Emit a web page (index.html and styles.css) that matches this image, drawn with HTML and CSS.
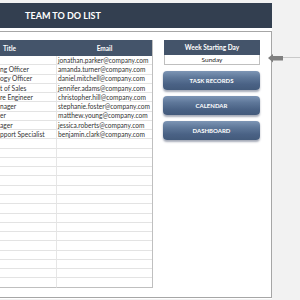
FILE: index.html
```html
<!DOCTYPE html>
<html>
<head>
<meta charset="utf-8">
<link rel="stylesheet" href="styles.css">
</head>
<body>
<div class="page">
  <div class="banner"><span class="banner-title">TEAM TO DO LIST</span></div>
  <div class="panel">
    <div class="frame">
      <div class="todo-table">
        <div class="th th-title">Title</div>
        <div class="th th-email">Email</div>
        <div class="td td-title"></div><div class="td td-email">jonathan.parker@company.com</div>
        <div class="td td-title">ng Officer</div><div class="td td-email">amanda.turner@company.com</div>
        <div class="td td-title">ogy Officer</div><div class="td td-email">daniel.mitchell@company.com</div>
        <div class="td td-title">t of Sales</div><div class="td td-email">jennifer.adams@company.com</div>
        <div class="td td-title">re Engineer</div><div class="td td-email">christopher.hill@company.com</div>
        <div class="td td-title">nager</div><div class="td td-email">stephanie.foster@company.com</div>
        <div class="td td-title">er</div><div class="td td-email">matthew.young@company.com</div>
        <div class="td td-title">ager</div><div class="td td-email">jessica.roberts@company.com</div>
        <div class="td td-title">pport Specialist</div><div class="td td-email">benjamin.clark@company.com</div>
        <div class="td td-title"></div><div class="td td-email"></div>
        <div class="td td-title"></div><div class="td td-email"></div>
        <div class="td td-title"></div><div class="td td-email"></div>
        <div class="td td-title"></div><div class="td td-email"></div>
        <div class="td td-title"></div><div class="td td-email"></div>
        <div class="td td-title"></div><div class="td td-email"></div>
        <div class="td td-title"></div><div class="td td-email"></div>
        <div class="td td-title"></div><div class="td td-email"></div>
        <div class="td td-title"></div><div class="td td-email"></div>
        <div class="td td-title"></div><div class="td td-email"></div>
        <div class="td td-title"></div><div class="td td-email"></div>
        <div class="td td-title"></div><div class="td td-email"></div>
        <div class="td td-title"></div><div class="td td-email"></div>
        <div class="td td-title"></div><div class="td td-email"></div>
        <div class="td td-title"></div><div class="td td-email"></div>
        <div class="td td-title last"></div><div class="td td-email last"></div>
      </div>
      <div class="side">
        <div class="week-head">Week Starting Day</div>
        <div class="week-value">Sunday</div>
        <div class="btn">TASK RECORDS</div>
        <div class="btn">CALENDAR</div>
        <div class="btn">DASHBOARD</div>
      </div>
    </div>
  </div>
  <svg class="pointer" width="32" height="10" viewBox="0 0 32 10">
    <line x1="4" y1="3.5" x2="32" y2="3.5" stroke="#c9c9c9" stroke-width="1"/>
    <polygon points="0,4 5,0 5,2 15,2 15,6.5 5,6.5 5,8.5" fill="#7f7f7f"/>
  </svg>
</div>
</body>
</html>
```

FILE: styles.css
```css
html, body {
  margin: 0;
  padding: 0;
}
body {
  background: #f2f2f2;
  font-family: Lato, "Open Sans", sans-serif;
  width: 300px;
  height: 300px;
  overflow: hidden;
}
.page {
  position: relative;
  padding-top: 3px;
}
.banner {
  width: 272px;
  height: 25px;
  background: #333f50;
  display: flex;
  align-items: center;
}
.banner-title {
  width: 126px;
  text-align: center;
  color: #fff;
  font-weight: bold;
  font-size: 9px;
}
.panel {
  width: 272px;
  background: #fff;
  padding-top: 3px;
  height: 271px;
  box-sizing: border-box;
}
.frame {
  border-top: 1px solid #a6a6a6;
  border-right: 1px solid #a6a6a6;
  border-bottom: 1px solid #a6a6a6;
  height: 267px;
  box-sizing: border-box;
  padding-top: 8px;
  display: flex;
  align-items: flex-start;
}
.todo-table {
  display: grid;
  grid-template-columns: 57px 95px;
  grid-template-rows: 16px repeat(25, 9.28px);
  width: 153px;
  border-right: 1px solid #bfbfbf;
  box-sizing: border-box;
}
.th {
  background: #44546a;
  color: #fff;
  font-weight: bold;
  font-size: 6.5px;
  display: flex;
  align-items: center;
}
.th-title {
  padding-left: 3px;
}
.th-email {
  justify-content: center;
}
.td {
  font-size: 6.6px;
  color: #333;
  border-bottom: 1px solid #e3e3e3;
  box-sizing: border-box;
  display: flex;
  align-items: center;
  white-space: nowrap;
  overflow: hidden;
  line-height: 1;
}
.td-title {
  border-right: 1px solid #e6e6e6;
  padding-left: 0;
}
.td-email {
  padding-left: 1px;
}
.td.last {
  border-bottom-color: #bfbfbf;
}
.side {
  margin-left: 11px;
  width: 96px;
  display: flex;
  flex-direction: column;
}
.week-head {
  height: 15px;
  background: #44546a;
  color: #fff;
  font-weight: bold;
  font-size: 6.5px;
  display: flex;
  align-items: center;
  justify-content: center;
}
.week-value {
  height: 10px;
  border: 1px solid #bfbfbf;
  border-top: none;
  box-sizing: border-box;
  font-size: 6.5px;
  color: #222;
  display: flex;
  align-items: center;
  justify-content: center;
  margin-bottom: 6px;
}
.btn {
  height: 19px;
  margin-bottom: 6px;
  margin-left: -1px;
  border-radius: 4px;
  background: linear-gradient(to bottom, #7d95b5 0%, #5e7799 35%, #4a6285 70%, #435a7b 100%);
  box-shadow: 0 1.5px 2px rgba(60, 70, 100, 0.45);
  color: #fff;
  font-weight: bold;
  font-size: 6px;
  display: flex;
  align-items: center;
  justify-content: center;
}
.pointer {
  position: absolute;
  left: 268px;
  top: 54px;
}
```
